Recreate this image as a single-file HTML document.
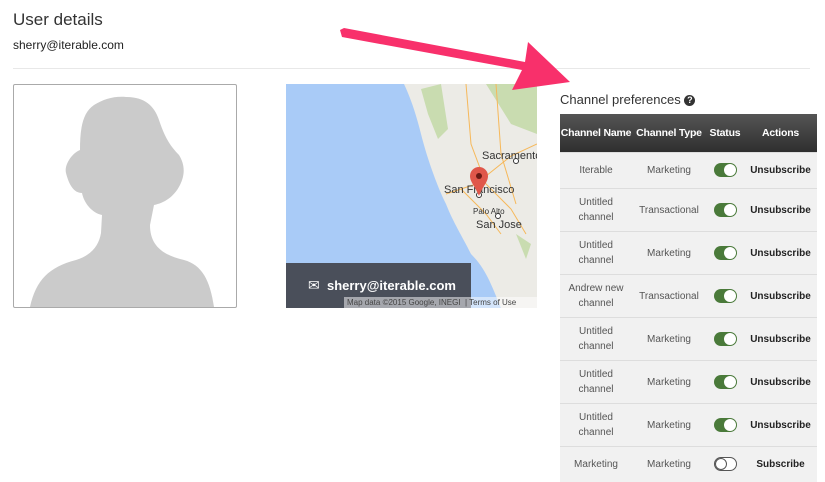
<!DOCTYPE html>
<html><head><style>
body{margin:0;width:825px;height:480px;background:#fff;font-family:"Liberation Sans",sans-serif;color:#333;position:relative;overflow:hidden}
.a{position:absolute}
table{border-collapse:collapse;font-size:10px}
td,th{text-align:center;padding:0;line-height:15px}
th{color:#fff;font-weight:bold;height:38px;font-size:10.5px;letter-spacing:-0.2px}
td{border-top:1px solid #ddd;color:#555}
tr.r1 td{height:35px}tr.r2 td{height:42px}
.tg{display:inline-block;width:23px;height:14px;border-radius:8px;background:#4a7a3a;position:relative;vertical-align:middle}
.tg:after{content:"";position:absolute;right:1px;top:1px;width:12px;height:12px;border-radius:50%;background:#fff}
.tg.off{background:#fff;border:1px solid #555;width:21px;height:12px}
.tg.off:after{left:0;top:0;right:auto;border:1px solid #555;width:10px;height:10px}
.ac{font-weight:bold;color:#222}
</style></head><body>
<div class="a" style="left:13px;top:10px;font-size:17px;color:#333">User details</div>
<div class="a" style="left:13px;top:38px;font-size:12px;color:#222">sherry@iterable.com</div>
<div class="a" style="left:13px;top:68px;width:797px;height:1px;background:#e8e8e8"></div>
<div class="a" style="left:13px;top:84px;width:222px;height:222px;border:1px solid #aaa;border-radius:2px;overflow:hidden">
<svg width="222" height="222" viewBox="0 0 222 222"><path fill="#cbcbcb" d="M16 222 C22 195 35 182 62 175 C78 170 85 160 87 148 L88 130 C78 128 70 118 68 108 C60 108 55 100 52 88 C50 80 58 68 66 65 C66 45 68 28 80 20 C90 14 100 11 112 12 C130 12 140 20 145 35 C150 50 155 60 165 70 C170 78 172 88 166 100 C160 112 150 118 140 120 L136 140 C136 160 148 170 170 175 C188 180 196 195 200 222 Z"/></svg></div>
<div class="a" style="left:286px;top:84px;width:251px;height:224px;background:#a9cbf7;overflow:hidden">
<svg width="251" height="224"><path fill="#ecebe6" d="M118 0 L251 0 L251 224 L215 224 C205 200 200 185 185 170 C175 150 168 140 160 120 C150 100 140 70 135 50 C130 30 125 15 118 0Z"/>
<path fill="#c9dcb0" d="M135 5 L155 0 L162 45 L152 55 L142 30Z M200 0 L251 0 L251 50 L225 40Z M230 150 L245 160 L240 175Z"/>
<g fill="none" stroke="#f6b85a" stroke-width="1"><path d="M180 0 L185 60 L200 100 L225 125 L240 150"/><path d="M160 110 L190 100 L225 72 L251 60"/><path d="M175 105 L200 130 L215 150"/><path d="M210 0 L215 70 L230 120"/></g>
<text x="196" y="75" font-size="11" fill="#333">Sacramento</text>
<text x="158" y="109" font-size="11" fill="#333">San Francisco</text>
<text x="187" y="130" font-size="8" fill="#333">Palo Alto</text>
<text x="190" y="144" font-size="11" fill="#333">San Jose</text>
<circle cx="230" cy="77" r="2.5" fill="#fff" stroke="#333"/><circle cx="193" cy="111" r="2.5" fill="#fff" stroke="#333"/><circle cx="212" cy="132" r="2.5" fill="#fff" stroke="#333"/>
<path d="M193 112 C189 102 184 98 184 92 A9 9 0 0 1 202 92 C202 98 197 102 193 112Z" fill="#e0574a"/><circle cx="193" cy="92" r="3" fill="#6a1a14"/>
</svg>
<div class="a" style="left:0;top:179px;width:185px;height:45px;background:#4a4f5a"></div>
<div class="a" style="left:22px;top:193px;color:#fff;font-size:13px;font-weight:bold"><span style="font-weight:normal;font-size:14px">✉</span>&nbsp; sherry@iterable.com</div>
<div class="a" style="left:58px;top:213px;width:193px;height:11px;background:rgba(255,255,255,.5);font-size:8px;color:#444;line-height:11px;padding-left:3px">Map data ©2015 Google, INEGI &nbsp;| Terms of Use</div>
</div>
<div class="a" style="left:560px;top:92px;font-size:13px;color:#333">Channel preferences <span style="display:inline-block;width:11px;height:11px;border-radius:50%;background:#333;color:#fff;font-size:9px;text-align:center;line-height:11px;font-weight:bold;vertical-align:1px">?</span></div>
<table class="a" style="left:560px;top:114px;width:257px">
<tr style="background:linear-gradient(#555,#2e2e2e)"><th style="width:72px">Channel Name</th><th style="width:74px">Channel Type</th><th style="width:38px">Status</th><th>Actions</th></tr>
<tbody style="background:#f1f1f1">
<tr class="r1"><td>Iterable</td><td>Marketing</td><td><span class="tg"></span></td><td class="ac">Unsubscribe</td></tr>
<tr class="r2"><td>Untitled<br>channel</td><td>Transactional</td><td><span class="tg"></span></td><td class="ac">Unsubscribe</td></tr>
<tr class="r2"><td>Untitled<br>channel</td><td>Marketing</td><td><span class="tg"></span></td><td class="ac">Unsubscribe</td></tr>
<tr class="r2"><td>Andrew new<br>channel</td><td>Transactional</td><td><span class="tg"></span></td><td class="ac">Unsubscribe</td></tr>
<tr class="r2"><td>Untitled<br>channel</td><td>Marketing</td><td><span class="tg"></span></td><td class="ac">Unsubscribe</td></tr>
<tr class="r2"><td>Untitled<br>channel</td><td>Marketing</td><td><span class="tg"></span></td><td class="ac">Unsubscribe</td></tr>
<tr class="r2"><td>Untitled<br>channel</td><td>Marketing</td><td><span class="tg"></span></td><td class="ac">Unsubscribe</td></tr>
<tr class="r1"><td>Marketing</td><td>Marketing</td><td><span class="tg off"></span></td><td class="ac">Subscribe</td></tr>
</tbody></table>
<svg class="a" style="left:0;top:0" width="825" height="480"><path d="M340 30 L342 37 L522 70 L512 90 L570 82 L528 42 L525 62 L344 28Z" fill="#f8306b"/></svg>
</body></html>
